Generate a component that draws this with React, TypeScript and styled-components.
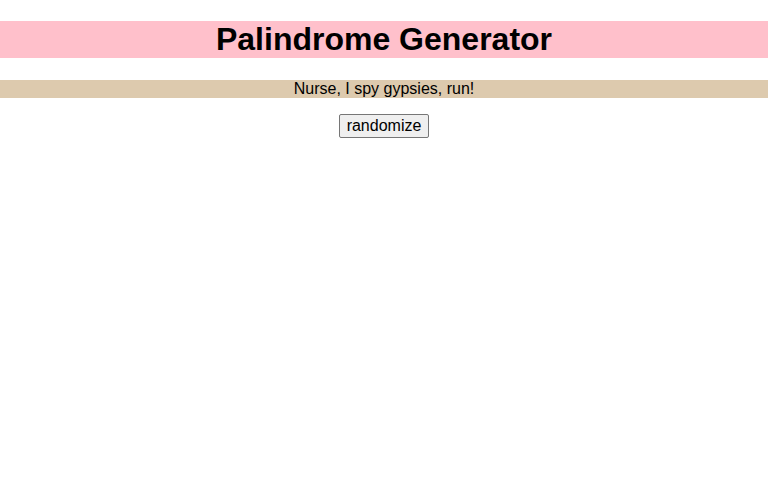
import { useState } from "react";
import styled, { createGlobalStyle } from "styled-components";

const GlobalStyle = createGlobalStyle`
  body {
    margin: 0;
    font-family: "Liberation Sans", Arial, sans-serif;
    background: #fff;
  }
`;

const palindromes = [
  "Nurse, I spy gypsies, run!",
  "A man, a plan, a canal: Panama",
  "Was it a car or a cat I saw?",
  "Never odd or even",
  "Step on no pets",
];

const Page = styled.div`
  display: flex;
  flex-direction: column;
  align-items: center;
  text-align: center;
`;

const Title = styled.h1`
  align-self: stretch;
  margin: 21px 0 22px;
  background: #ffc0cb;
  color: #000;
  font-size: 32px;
  font-weight: bold;
  line-height: 37px;
`;

const Phrase = styled.p`
  align-self: stretch;
  margin: 0 0 16px;
  background: #ddcaae;
  color: #000;
  font-size: 16px;
  line-height: 18px;
`;

const RandomButton = styled.button`
  font-family: "Liberation Sans", Arial, sans-serif;
  font-size: 16px;
  line-height: 18px;
  padding: 2px 7px 2px;
  height: 24px;
  color: #000;
  background: #efefef;
  border: 1px solid #767676;
  border-radius: 2px;
  cursor: pointer;
`;

export default function App() {
  const [index, setIndex] = useState(0);

  const randomize = () => {
    let next = Math.floor(Math.random() * palindromes.length);
    if (next === index) next = (next + 1) % palindromes.length;
    setIndex(next);
  };

  return (
    <>
      <GlobalStyle />
      <Page>
        <Title>Palindrome Generator</Title>
        <Phrase>{palindromes[index]}</Phrase>
        <RandomButton onClick={randomize}>randomize</RandomButton>
      </Page>
    </>
  );
}
